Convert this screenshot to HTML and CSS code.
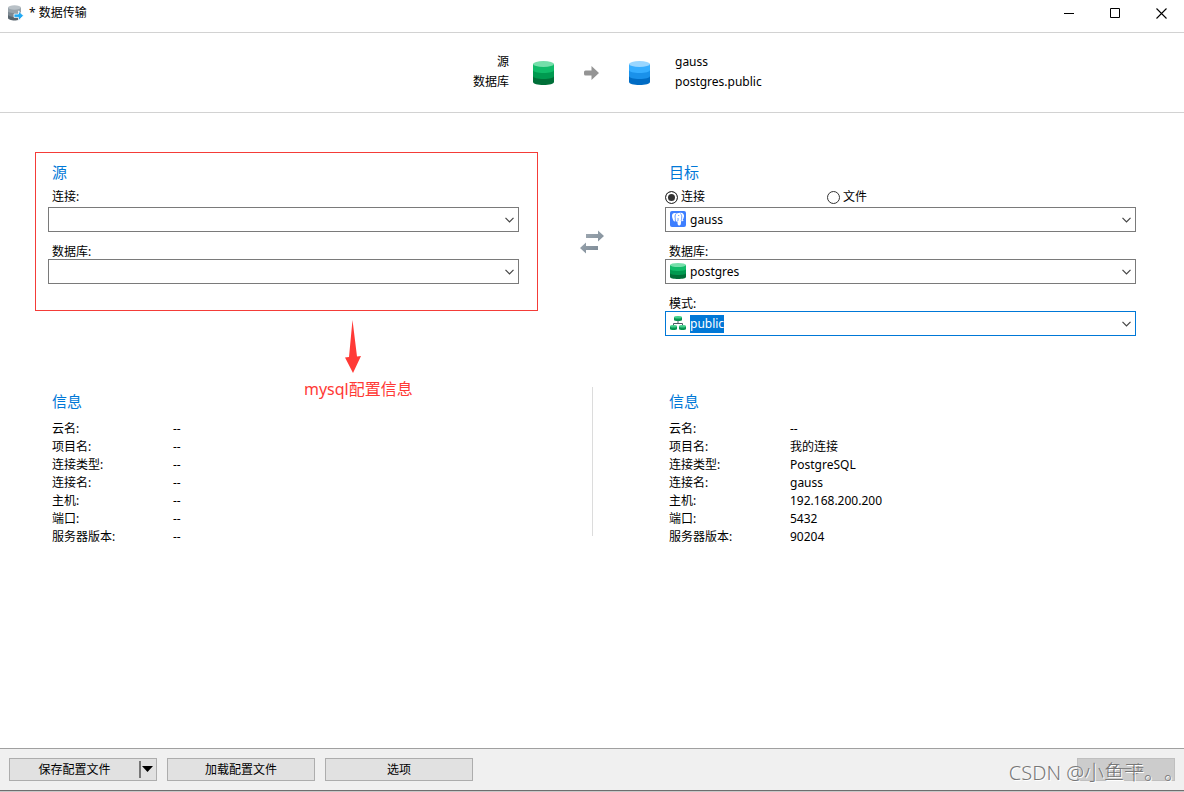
FILE: index.html
```html
<!DOCTYPE html>
<html lang="zh-CN">

<head>
    <meta charset="UTF-8">
    <meta name="viewport" content="width=device-width, initial-scale=1.0">
    <title>数据传输</title>
    <link rel="stylesheet" href="styles.css">
</head>

<body>
    <!-- Shared icon shapes -->
    <svg class="defs" width="0" height="0" aria-hidden="true">
        <linearGradient id="steel" x1="0" x2="1" y1="0" y2="1">
            <stop offset="0" stop-color="#a3adb6" />
            <stop offset="1" stop-color="#788692" />
        </linearGradient>
        <symbol id="db-green" viewBox="0 0 21 24">
            <path fill="#006f38" d="M0 15v6c0 1.700 4.700 3 10.500 3S21 22.700 21 21v-6z" />
            <path fill="#009a50" d="M0 9v6c0 1.700 4.700 3 10.500 3S21 16.700 21 15V9z" />
            <path fill="#10bb69" d="M0 3v6c0 1.700 4.700 3 10.500 3S21 10.700 21 9V3z" />
            <ellipse fill="#75dfaa" cx="10.500" cy="3" rx="10.500" ry="3" />
        </symbol>
        <symbol id="db-blue" viewBox="0 0 21 24">
            <path fill="#006cc4" d="M0 15v6c0 1.700 4.700 3 10.500 3S21 22.700 21 21v-6z" />
            <path fill="#1a91ea" d="M0 9v6c0 1.700 4.700 3 10.500 3S21 16.700 21 15V9z" />
            <path fill="#36adff" d="M0 3v6c0 1.700 4.700 3 10.500 3S21 10.700 21 9V3z" />
            <ellipse fill="#9ad6ff" cx="10.500" cy="3" rx="10.500" ry="3" />
        </symbol>
        <symbol id="chevron" viewBox="0 0 9 6">
            <path d="M0.500 0.800l4 4 4-4" fill="none" stroke="#444" stroke-width="1.200" />
        </symbol>
    </svg>

    <header class="titlebar">
        <svg class="app-icon" width="16" height="16" viewBox="0 0 16 16" aria-hidden="true">
            <path fill="#59656e" d="M0 9v4c0 1.300 3 2.500 6.500 2.500S13 14.300 13 13V9z" />
            <path fill="#7d8992" d="M0 5v4.500C0 10.800 3 12 6.500 12S13 10.800 13 9.500V5z" />
            <path fill="#98a3ab" d="M0 2.500V6c0 1.300 3 2.200 6.500 2.200S13 7.300 13 6V2.500z" />
            <ellipse fill="#b9c1c7" cx="6.500" cy="2.500" rx="6.500" ry="2.200" />
            <path fill="#22aaf5" stroke="#fff" stroke-width=".8" d="M6 9h4.500V6l5 4.700-5 4.700v-3H6z" />
        </svg>
        <span class="title">* 数据传输</span>
        <div class="window-controls">
            <button type="button" aria-label="最小化">
                <svg width="11" height="11" viewBox="0 0 11 11"><path d="M0 5.500h10" stroke="#000" /></svg>
            </button>
            <button type="button" aria-label="最大化">
                <svg width="11" height="11" viewBox="0 0 11 11"><path d="M.5.500h9v9h-9z" fill="none" stroke="#000" /></svg>
            </button>
            <button type="button" aria-label="关闭">
                <svg width="11" height="11" viewBox="0 0 11 11"><path d="M.5.500l10 10M10.500.500l-10 10" stroke="#000" stroke-width="1.100" /></svg>
            </button>
        </div>
    </header>

    <section class="route">
        <div class="route-source">源<br>数据库</div>
        <div class="route-icons">
            <svg width="21" height="24"><use href="#db-green" /></svg>
            <svg width="15" height="14" viewBox="0 0 15 14"><path fill="#949494" d="M1.500 4.500H7.500V0L15 7l-7.500 7V9.500H1.500Q0 9.500 0 8V6q0-1.500 1.500-1.500z" /></svg>
            <svg width="21" height="24"><use href="#db-blue" /></svg>
        </div>
        <div class="route-target">gauss<br>postgres.public</div>
    </section>

    <main class="content">
        <section class="panel source">
            <h2>源</h2>
            <label class="first-label" for="srcConn">连接:</label>
            <div class="combo">
                <select id="srcConn"></select>
                <svg class="arrow" width="9" height="6"><use href="#chevron" /></svg>
            </div>
            <label for="srcDb">数据库:</label>
            <div class="combo">
                <select id="srcDb"></select>
                <svg class="arrow" width="9" height="6"><use href="#chevron" /></svg>
            </div>

            <!-- Note drawn on top of the form -->
            <div class="note-box"></div>
            <div class="note">
                <svg width="16" height="53" viewBox="0 0 16 53"><path fill="#ff3a36" d="M7.500 0L12 36.500l4-.5-8 17L0 37.500l4-.5z" /></svg>
                <span>mysql配置信息</span>
            </div>
        </section>

        <div class="swap">
            <button type="button" aria-label="交换">
                <svg width="24" height="24" viewBox="0 0 24 24">
                    <path fill="url(#steel)" d="M6 4h12V.500L24 6l-6 5.500V8H6zM18 16H6v-3.500L0 18l6 5.500V20h12z" />
                </svg>
            </button>
        </div>

        <section class="panel target">
            <h2>目标</h2>
            <div class="radios">
                <label><input type="radio" name="targetType" checked>连接</label>
                <label><input type="radio" name="targetType">文件</label>
            </div>
            <div class="combo with-icon">
                <svg class="icon" width="16" height="16" viewBox="0 0 16 16">
                    <rect width="16" height="16" rx="2" fill="#3d7eff" />
                    <path fill="#fff" d="M2 5c0-2 1-3 2.600-3 1 0 1.400.3 2 .5C7.400 2 8 1.800 9 2c1-.4 2-.4 3 0 1.600.5 2.300 2 2 3.500-.2 1.500-.8 2.700-1.500 3.700h1.200c-.5.900-1.500 1-2.600.9-.3 2 .1 4.200-1.600 4.400-2 .2-2-2-2-4-.9.200-1.500 0-2-.5C4.500 11 3.700 10.400 3 8.800 2.400 7.400 2 6.200 2 5z" />
                    <path fill="none" stroke="#3d7eff" stroke-width=".8" d="M6 2.800C4.800 4 5 6 5.300 7.500c.1 1-.3 2 .2 2.600M10.500 2.500c1.300 1.400 1.500 3 1.100 4.700-.2 1 .2 1.700-.6 2.600M7.500 10c.8-.5.500-2 .5-3M8.200 4.500h1" />
                </svg>
                <select aria-label="连接"><option>gauss</option></select>
                <svg class="arrow" width="9" height="6"><use href="#chevron" /></svg>
            </div>
            <label for="dstDb">数据库:</label>
            <div class="combo with-icon">
                <svg class="icon" width="16" height="16" viewBox="0 0 21 24" preserveAspectRatio="none"><use href="#db-green" width="21" height="24" /></svg>
                <select id="dstDb"><option>postgres</option></select>
                <svg class="arrow" width="9" height="6"><use href="#chevron" /></svg>
            </div>
            <label for="dstSchema">模式:</label>
            <div class="combo with-icon active">
                <svg class="icon" width="16" height="16" viewBox="0 0 16 16">
                    <path fill="none" stroke="#4b5a64" d="M8 5v4M3.500 11V8.500h9V11" />
                    <path fill="#079451" d="M4 2v3c0 1.300 8 1.300 8 0V2zM0 11v3c0 1.300 7 1.300 7 0v-3zM9 11v3c0 1.300 7 1.300 7 0v-3z" />
                    <g fill="#45cf8b">
                        <ellipse cx="8" cy="2.200" rx="4" ry="1.300" />
                        <ellipse cx="3.500" cy="11.200" rx="3.500" ry="1.300" />
                        <ellipse cx="12.500" cy="11.200" rx="3.500" ry="1.300" />
                    </g>
                </svg>
                <input type="text" id="dstSchema" value="public">
                <button type="button" aria-label="展开"><svg class="arrow" width="9" height="6"><use href="#chevron" /></svg></button>
            </div>
        </section>

        <section class="info">
            <h2>信息</h2>
            <dl>
                <dt>云名:</dt><dd>--</dd>
                <dt>项目名:</dt><dd>--</dd>
                <dt>连接类型:</dt><dd>--</dd>
                <dt>连接名:</dt><dd>--</dd>
                <dt>主机:</dt><dd>--</dd>
                <dt>端口:</dt><dd>--</dd>
                <dt>服务器版本:</dt><dd>--</dd>
            </dl>
        </section>

        <div class="divider"></div>

        <section class="info">
            <h2>信息</h2>
            <dl>
                <dt>云名:</dt><dd>--</dd>
                <dt>项目名:</dt><dd>我的连接</dd>
                <dt>连接类型:</dt><dd>PostgreSQL</dd>
                <dt>连接名:</dt><dd>gauss</dd>
                <dt>主机:</dt><dd>192.168.200.200</dd>
                <dt>端口:</dt><dd>5432</dd>
                <dt>服务器版本:</dt><dd>90204</dd>
            </dl>
        </section>
    </main>

    <footer class="actions">
        <button type="button" class="btn split">
            <span>保存配置文件</span>
            <svg width="17" height="17" viewBox="0 0 17 17"><path d="M1 0v17" stroke="#777" stroke-width="2" /><path d="M3 5h11l-5.500 6z" /></svg>
        </button>
        <button type="button" class="btn">加载配置文件</button>
        <button type="button" class="btn">选项</button>
        <button type="button" class="btn next" disabled>下一步</button>
        <span class="watermark">CSDN @小鱼干。。</span>
    </footer>

    <script>
        // Schema box starts focused with its text selected
        const schema = document.getElementById('dstSchema');
        schema.focus();
        schema.select();
    </script>
</body>

</html>
```
FILE: styles.css
```css
* {
    box-sizing: border-box;
}

body {
    display: flex;
    flex-direction: column;
    min-height: 100vh;
    margin: 0;
    padding-bottom: 1px;
    background-color: #c8c8c8;
    color: #000;
    font-family: "Noto Sans", "Noto Sans CJK SC", sans-serif;
    font-size: 12px;
    line-height: 18px;
}

svg {
    display: block;
}

.defs {
    position: absolute;
}

button,
input,
select {
    font: inherit;
    color: inherit;
}

h2 {
    margin: 0;
    padding-left: 4px;
    color: #0078d7;
    font-size: 15px;
    font-weight: 400;
    line-height: 20px;
}

.titlebar {
    display: flex;
    align-items: center;
    height: 33px;
    padding: 0 0 6px 8px;
    background-color: #fff;
    border-bottom: 1px solid #d2d2d2;
}

.title {
    margin-left: 5px;
}

.window-controls {
    display: flex;
    margin-left: auto;
}

.window-controls button {
    display: flex;
    align-items: center;
    justify-content: center;
    width: 46px;
    height: 26px;
    padding: 0;
    background: none;
    border: none;
}

/* Source -> target summary */
.route {
    display: grid;
    grid-template-columns: 1fr auto 1fr;
    align-items: center;
    padding: 19px 0 20px;
    background-color: #fff;
    border-bottom: 1px solid #d2d2d2;
    line-height: 20px;
}

.route-source {
    text-align: right;
}

.route-icons {
    display: flex;
    align-items: center;
    gap: 30px;
    padding: 2px 25px 0 24px;
}

/* Main form */
.content {
    flex: 1;
    display: grid;
    grid-template-columns: 1fr 146px 1fr;
    grid-template-rows: auto auto;
    align-content: start;
    row-gap: 51px;
    padding: 49px 48px;
    background-color: #fff;
}

.panel {
    position: relative;
}

.panel > label {
    display: block;
    margin-top: 13px;
    padding-left: 4px;
    line-height: 14px;
}

.panel > .first-label {
    margin-top: 5px;
    line-height: 20px;
}

.radios {
    display: flex;
    margin-top: 5px;
    line-height: 20px;
}

.radios label {
    display: flex;
    align-items: center;
    gap: 3px;
    width: 162px;
}

.radios input {
    appearance: none;
    width: 13px;
    height: 13px;
    margin: 0;
    background-color: #fff;
    border: 1px solid #333;
    border-radius: 50%;
}

.radios input:checked {
    background-color: #333;
    box-shadow: inset 0 0 0 2px #fff;
}

.combo {
    position: relative;
    display: flex;
    height: 25px;
    background-color: #fff;
    border: 1px solid #7a7a7a;
}

.combo.active {
    border-color: #0078d7;
}

.combo select,
.combo input {
    appearance: none;
    flex: 1;
    min-width: 0;
    padding: 0 4px;
    background: none;
    border: none;
    outline: none;
}

.combo.with-icon select,
.combo.with-icon input {
    padding-left: 24px;
}

.combo input::selection {
    background-color: #0078d7;
    color: #fff;
}

.combo button {
    width: 17px;
    padding: 0;
    background: none;
    border: none;
}

.combo .arrow {
    position: absolute;
    top: 9px;
    right: 4px;
    pointer-events: none;
}

.combo .icon {
    position: absolute;
    top: 3px;
    left: 4px;
}

.swap {
    padding-top: 68px;
}

.swap button {
    display: block;
    margin: 0 auto;
    padding: 0;
    background: none;
    border: none;
}

/* Red annotation */
.note-box {
    position: absolute;
    top: -10px;
    left: -13px;
    right: -19px;
    height: 159px;
    border: 1px solid #f43c38;
    pointer-events: none;
}

.note {
    position: absolute;
    top: 158px;
    left: 256px;
    color: #ff3a36;
    font-size: 16px;
    line-height: 24px;
    white-space: nowrap;
}

.note svg {
    margin: 0 0 4px 41px;
}

.divider {
    justify-self: center;
    width: 1px;
    height: 149px;
    background-color: #dcdcdc;
}

.info {
    padding-top: 4px;
}

.info dl {
    display: grid;
    grid-template-columns: 121px 1fr;
    margin: 9px 0 0;
    padding-left: 4px;
}

.info dd {
    margin: 0;
}

/* Bottom bar */
.actions {
    position: relative;
    display: flex;
    gap: 10px;
    padding: 9px;
    background-color: #f0f0f0;
    border-top: 1px solid #a0a0a0;
    border-bottom: 1px solid #6e6e6e;
}

.btn {
    width: 148px;
    height: 23px;
    padding: 0;
    background-color: #e1e1e1;
    border: 1px solid #adadad;
    line-height: 21px;
}

.split {
    display: flex;
    align-items: center;
}

.split span {
    flex: 1;
}

.next {
    width: 98px;
    margin-left: auto;
    background-color: #ccc;
    border-color: #bfbfbf;
    color: #838383;
}

.watermark {
    position: absolute;
    top: 12px;
    right: 0;
    color: #777;
    font-size: 20px;
    font-weight: 300;
    line-height: 24px;
    text-shadow: 1px 1px 0 #fff;
    text-spacing-trim: space-all;
    white-space: nowrap;
}
```
